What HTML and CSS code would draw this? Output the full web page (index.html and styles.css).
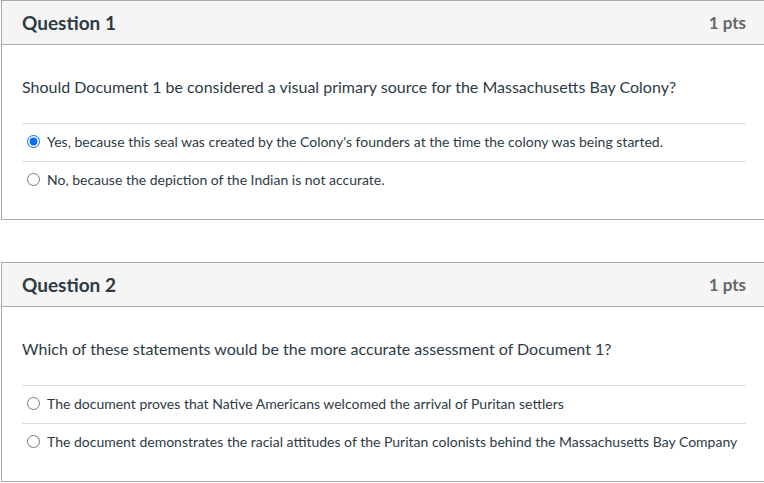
FILE: index.html
```html
<!DOCTYPE html>
<html>
<head>
<meta charset="utf-8">
<link rel="stylesheet" href="styles.css">
</head>
<body>
<div class="page">
  <div class="card">
    <div class="card-header">
      <span class="title">Question 1</span>
      <span class="pts">1 pts</span>
    </div>
    <div class="card-body">
      <p class="question">Should Document 1 be considered a visual primary source for the Massachusetts Bay Colony?</p>
      <div class="answers">
        <label class="answer"><input type="radio" name="q1" checked><span>Yes, because this seal was created by the Colony's founders at the time the colony was being started.</span></label>
        <label class="answer"><input type="radio" name="q1"><span>No, because the depiction of the Indian is not accurate.</span></label>
      </div>
    </div>
  </div>
  <div class="card">
    <div class="card-header">
      <span class="title">Question 2</span>
      <span class="pts">1 pts</span>
    </div>
    <div class="card-body">
      <p class="question">Which of these statements would be the more accurate assessment of Document 1?</p>
      <div class="answers">
        <label class="answer"><input type="radio" name="q2"><span>The document proves that Native Americans welcomed the arrival of Puritan settlers</span></label>
        <label class="answer"><input type="radio" name="q2"><span>The document demonstrates the racial attitudes of the Puritan colonists behind the Massachusetts Bay Company</span></label>
      </div>
    </div>
  </div>
</div>
</body>
</html>
```
FILE: styles.css
```css
html, body {
  margin: 0;
  padding: 0;
  overflow: hidden;
  background: #fff;
}
body {
  font-family: Lato, "Open Sans", sans-serif;
  color: #2d3b45;
}
.page {
  padding-left: 1px;
  display: flex;
  flex-direction: column;
  gap: 42px;
}
.card {
  border: 1px solid #aaaaaa;
  box-sizing: border-box;
  width: 766px;
}
.card-header {
  height: 43px;
  background: #f5f5f5;
  border-bottom: 1px solid #aaaaaa;
  display: flex;
  align-items: center;
  justify-content: space-between;
  padding: 0 20px;
}
.title {
  font-size: 19px;
  font-weight: 700;
  color: #2d3b45;
}
.pts {
  font-size: 17px;
  font-weight: 700;
  color: #666;
}
.card-body {
  padding: 30px 20px 19px;
}
.question {
  margin: 0;
  font-size: 16px;
  line-height: 24px;
  height: 48px;
}
.answers {
  border-top: 1px solid #ddd;
}
.answer {
  display: flex;
  align-items: center;
  height: 38px;
  box-sizing: border-box;
  padding-bottom: 3px;
  border-bottom: 1px solid #ddd;
  font-size: 14px;
}
.answer:last-child {
  border-bottom: none;
}
.answer input {
  margin: 0 7px 0 5px;
  width: 13px;
  height: 13px;
  accent-color: #0b6cf6;
}
```
